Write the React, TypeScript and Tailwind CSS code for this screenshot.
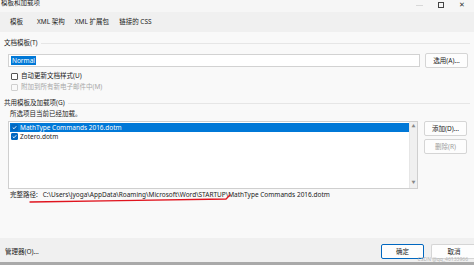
import React from 'react'

const FONT = { fontFamily: '"Noto Sans", "Noto Sans CJK SC", sans-serif' }

const rutaCompleta = 'C:\\Users\\jyoga\\AppData\\Roaming\\Microsoft\\Word\\STARTUP\\MathType Commands 2016.dotm'

const tabs = ['模板', 'XML 架构', 'XML 扩展包', '链接的 CSS']

const CheckBox = ({ checked, disabled }: { checked?: boolean; disabled?: boolean }) => (
    <span
        className={`inline-flex items-center justify-center w-[7px] h-[7px] rounded-[1px] border shrink-0 ${
            checked ? 'bg-[#0067c0] border-[#0067c0]' : disabled ? 'border-[#cfcfcf] bg-[#f9f9f9]' : 'border-[#555] bg-white'
        }`}
    >
        {checked && (
            <svg width="5" height="5" viewBox="0 0 10 10">
                <path d="M1.5 5.2 L4 7.5 L8.5 2.5" stroke="white" strokeWidth="1.8" fill="none" />
            </svg>
        )}
    </span>
)

const Btn = ({ label, disabled, primary, className = '' }: { label: string; disabled?: boolean; primary?: boolean; className?: string }) => (
    <div
        className={`flex items-center justify-center h-[15px] rounded-[2px] border text-[6.5px] ${
            primary ? 'border-[#0067c0] bg-[#fdfdfd]' : 'border-[#d5d5d5] bg-[#fdfdfd]'
        } ${disabled ? 'text-[#a0a0a0]' : 'text-[#222]'} ${className}`}
    >
        {label}
    </div>
)

const SectionTitle = ({ text }: { text: string }) => (
    <div className="flex items-center gap-[3px] h-[10px]">
        <span className="whitespace-nowrap">{text}</span>
        <div className="flex-1 h-px bg-[#e6e6e6]" />
    </div>
)

export default function App() {
    return (
        <div style={FONT} className="relative w-[474px] h-[265px] overflow-hidden bg-[#f9f9f9] text-[6.5px] text-[#222] flex flex-col">
            {/* barra de titulo */}
            <div className="h-[12px] bg-[#f6f6f6] flex items-start justify-between">
                <span className="text-[6.5px] leading-[7px] -mt-[1px] pl-[1px]">模板和加载项</span>
                <div className="flex items-center gap-[15px] pr-[9px] text-[#333] text-[7px] leading-[8px] mt-[1px]">
                    <span className="w-[7px] h-px bg-[#d8d8d8] mt-[1px]" />
                    <span className="w-[6px] h-[6px] border border-[#444]" />
                    <span>✕</span>
                </div>
            </div>

            {/* pestañas */}
            <div className="h-[20px] bg-[#f0f0f0] flex items-center pl-[10px] gap-[10px]">
                {tabs.map((t, i) => (
                    <span key={t} className={`whitespace-nowrap ${i === 0 ? 'mr-[4px]' : ''}`}>{t}</span>
                ))}
            </div>

            <div className="flex-1 flex flex-col px-[4px] pt-[6px]">
                <SectionTitle text="文档模板(T)" />

                <div className="flex items-center mt-[5px] pl-[4px] pr-[2px]">
                    <div className="flex-1 h-[13px] bg-white border border-[#d2d2d2] flex items-center pl-[2px]">
                        <span className="bg-[#0078d7] text-white px-[1px] leading-[9px]">Normal</span>
                    </div>
                    <Btn label="选用(A)..." className="w-[43px] ml-[5px]" />
                </div>

                <div className="flex items-center gap-[3px] pl-[7px] mt-[3px] h-[10px]">
                    <CheckBox />
                    <span>自动更新文档样式(U)</span>
                </div>
                <div className="flex items-center gap-[3px] pl-[7px] mt-[1px] h-[10px] text-[#a8a8a8]">
                    <CheckBox disabled />
                    <span>附加到所有新电子邮件中(M)</span>
                </div>

                <div className="mt-[6px]">
                    <SectionTitle text="共用模板及加载项(G)" />
                </div>
                <div className="pl-[6px] mt-[1px] h-[10px] flex items-center">所选项目当前已经加载。</div>

                <div className="flex mt-[2px] pl-[4px] pr-[2px]">
                    <div className="w-[410px] h-[68px] bg-white border border-[#cfcfcf] flex">
                        <div className="flex-1 pt-[1px] pl-[1px]">
                            <div className="h-[9px] bg-[#0078d7] text-white flex items-center gap-[2px] pl-[1px]">
                                <CheckBox checked />
                                <span>MathType Commands 2016.dotm</span>
                            </div>
                            <div className="h-[9px] flex items-center gap-[2px] pl-[1px]">
                                <CheckBox checked />
                                <span>Zotero.dotm</span>
                            </div>
                        </div>
                        <div className="w-[8px] bg-[#f0f0f0] border-l border-[#e6e6e6] flex flex-col items-center justify-between text-[#888] text-[4px] py-[2px]">
                            <span>▲</span>
                            <span>▼</span>
                        </div>
                    </div>
                    <div className="flex flex-col gap-[3px] ml-[6px]">
                        <Btn label="添加(D)..." className="w-[43px]" />
                        <Btn label="删除(R)" disabled className="w-[43px]" />
                    </div>
                </div>

                <div className="flex items-center h-[10px] mt-[1px] pl-[6px] gap-[5px]">
                    <span>完整路径:</span>
                    <span className="whitespace-nowrap">{rutaCompleta}</span>
                </div>
            </div>

            {/* pie */}
            <div className="h-[24px] bg-[#f0f0f0] flex items-end justify-between pl-[5px] pb-[3px]">
                <span className="h-[15px] flex items-center">管理器(O)...</span>
                <div className="flex items-center gap-[7px] -mr-[2px]">
                    <Btn label="确定" primary className="w-[43px]" />
                    <Btn label="取消" className="w-[45px] rounded-r-none border-r-0" />
                </div>
            </div>
            <div className="h-[3px] bg-[#a9a9a9]" />

            {/* subrayado rojo dibujado a mano */}
            <svg className="absolute left-0 top-0 pointer-events-none" width="474" height="265">
                <path d="M30 202 C 90 201, 170 200, 226 199 L 230 195" stroke="#e0141e" strokeWidth="1.3" fill="none" strokeLinecap="round" />
            </svg>

            <span className="absolute right-[6px] bottom-[3px] text-[5px] text-[#b5b5b5] leading-[6px]">CSDN @qq_46133966</span>
        </div>
    )
}
